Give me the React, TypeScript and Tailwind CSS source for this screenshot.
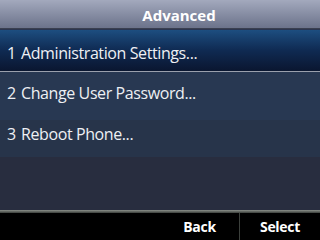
import React from 'react';

const items = [
  { n: '1', label: 'Administration Settings...' },
  { n: '2', label: 'Change User Password...' },
  { n: '3', label: 'Reboot Phone...' },
];

const App: React.FC = () => {
  return (
    <div
      className="w-[320px] h-[240px] flex flex-col overflow-hidden bg-[#282d3f] text-[#eef0f4]"
      style={{ fontFamily: '"Open Sans", sans-serif' }}
    >
      <div className="h-[29px] shrink-0 flex items-center justify-center pl-[38px] pt-[2px] bg-gradient-to-b from-[#a3a9bd] to-[#6c738b] border-b border-[#3a3f50]">
        <span className="text-[15px] font-bold text-white">Advanced</span>
      </div>

      <div className="h-[1px] shrink-0 bg-[#2b3550]" />

      <div className="h-[42px] shrink-0 flex items-center pt-[4px] px-[7px] bg-gradient-to-b from-[#1d4e80] via-[#0f2a52] to-[#0a1630] border-b border-[#9aa0ad] text-[16px] tracking-[-0.4px]">
        <span className="w-[14px]">{items[0].n}</span>
        <span>{items[0].label}</span>
      </div>

      <div className="h-[48px] shrink-0 flex items-start pt-[9px] px-[7px] bg-[#283852] text-[16px] tracking-[-0.4px]">
        <span className="w-[14px]">{items[1].n}</span>
        <span>{items[1].label}</span>
      </div>

      <div className="h-[37px] shrink-0 flex items-start pt-[2px] px-[7px] bg-[#27344a] text-[16px] tracking-[-0.4px]">
        <span className="w-[14px]">{items[2].n}</span>
        <span>{items[2].label}</span>
      </div>

      <div className="flex-1" />

      <div className="h-[30px] shrink-0 flex flex-col bg-black">
        <div className="h-[3px] bg-gradient-to-b from-[#8d928c] to-[#3c403c]" />
        <div className="flex-1 grid grid-cols-4 text-[14px] font-bold text-white tracking-[-0.3px]">
          <div />
          <div />
          <div className="flex items-center justify-center border-r border-[#3c403c]">Back</div>
          <div className="flex items-center justify-center">Select</div>
        </div>
      </div>
    </div>
  );
};

export default App;
